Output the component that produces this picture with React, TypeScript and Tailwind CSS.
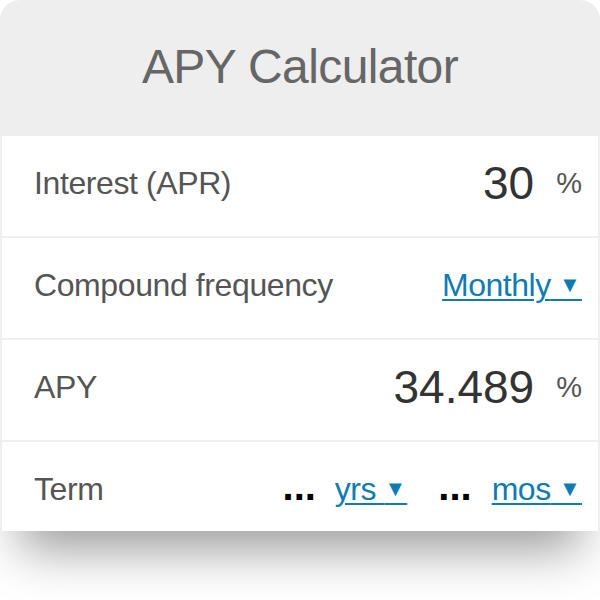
import React from 'react';

const font = { fontFamily: '"Liberation Sans", Arial, sans-serif' };

function Dropdown({ label }: { label: string }) {
    return (
        <span className="text-[#0f7bb5] underline decoration-2 underline-offset-[3px] text-[32px] tracking-[-0.5px]">
            {label}
            {' '}
            <span className="text-[22px] tracking-normal relative -top-[4px]">▼</span>
            <span className="text-[6px]">&nbsp;</span>
        </span>
    );
}

function Row({ label, children }: { label: string; children: React.ReactNode }) {
    return (
        <div className="flex items-center justify-between h-[100px] bg-white pl-[32px] pr-[16px] pb-[6px] shrink-0">
            <span className="text-[32px] tracking-[-0.4px] text-[#555]">{label}</span>
            <div className="flex items-center">{children}</div>
        </div>
    );
}

function Value({ value }: { value: string }) {
    return (
        <>
            <span className="text-[46px] text-[#333] leading-none">{value}</span>
            <span className="ml-[22px] text-[29px] text-[#555] leading-none">%</span>
        </>
    );
}

export default function App() {
    return (
        <div className="w-[600px] h-[600px] bg-white overflow-hidden" style={font}>
            <div className="h-[531px] rounded-t-[20px] bg-[#eeeeee] px-[2px] overflow-hidden flex flex-col shadow-[0_38px_48px_-20px_rgba(0,0,0,0.4)]">
                <div className="h-[136px] shrink-0 flex items-center justify-center pb-[2px]">
                    <h1 className="text-[48px] tracking-[-0.6px] text-[#666]">APY Calculator</h1>
                </div>
                <div className="flex flex-col gap-[2px]">
                    <Row label="Interest (APR)">
                        <Value value="30" />
                    </Row>
                    <Row label="Compound frequency">
                        <Dropdown label="Monthly" />
                    </Row>
                    <Row label="APY">
                        <Value value="34.489" />
                    </Row>
                    <Row label="Term">
                        <div className="flex items-baseline">
                            <span className="text-[40px] font-bold text-black leading-none">...</span>
                            <span className="ml-[19px]">
                                <Dropdown label="yrs" />
                            </span>
                            <span className="ml-[31px] text-[40px] font-bold text-black leading-none">...</span>
                            <span className="ml-[20px]">
                                <Dropdown label="mos" />
                            </span>
                        </div>
                    </Row>
                </div>
            </div>
        </div>
    );
}
